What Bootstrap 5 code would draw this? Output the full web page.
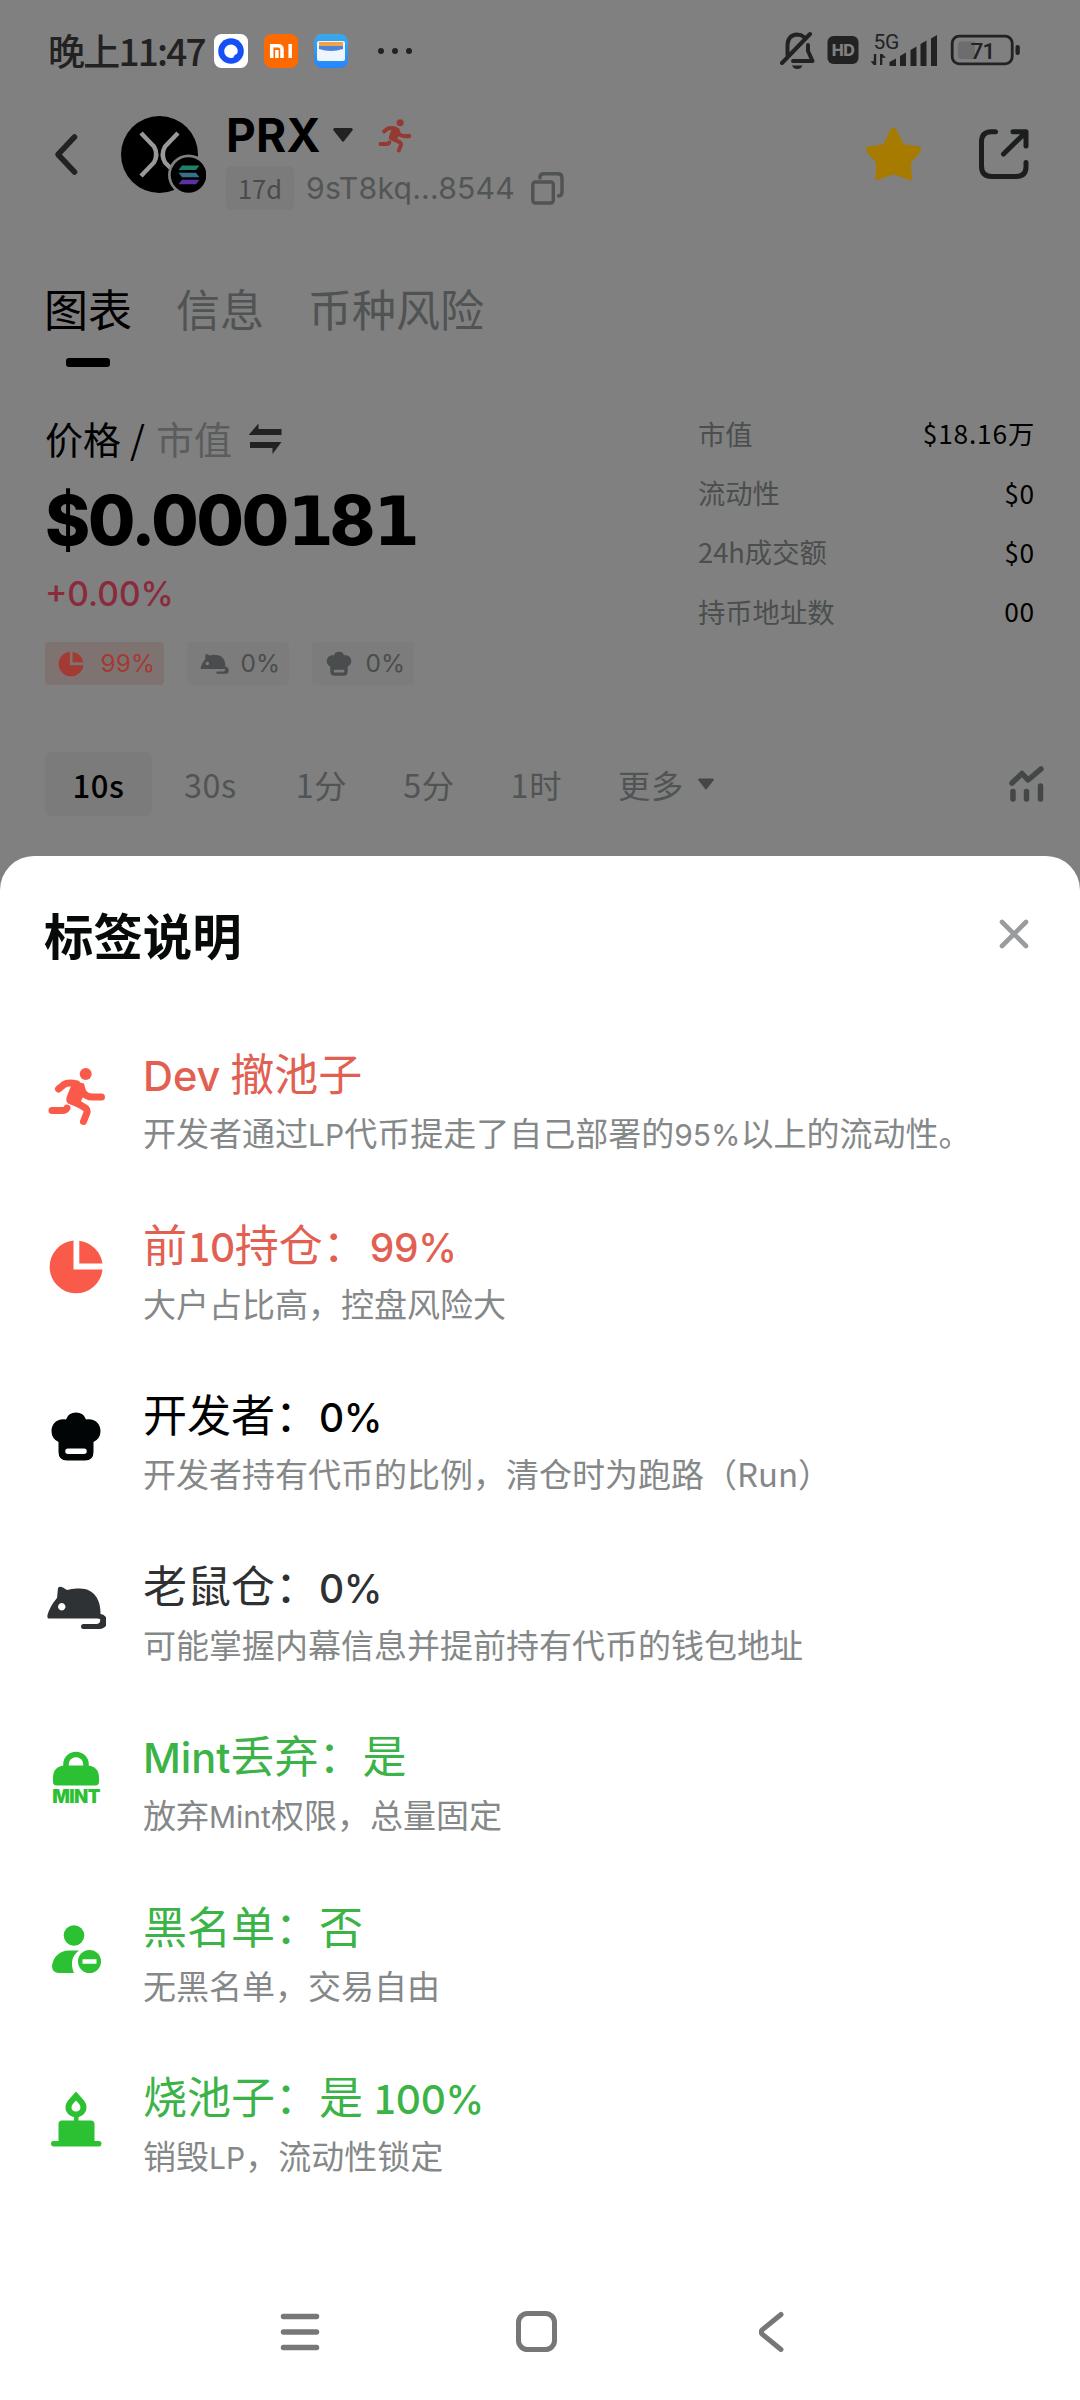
<!DOCTYPE html>
<html lang="zh-CN">
<head>
<meta charset="utf-8">
<meta name="viewport" content="width=device-width, initial-scale=1">
<title>PRX</title>
<link href="https://cdn.jsdelivr.net/npm/bootstrap@5.3.0/dist/css/bootstrap.min.css" rel="stylesheet">
<style>
body{background:#808080;font-family:"Noto Sans CJK SC","Noto Sans",sans-serif;color:#000;line-height:1;width:1080px;height:2400px;overflow:hidden;font-size:33px}
svg{display:block;flex:none}
.lat{font-family:Inter,"Noto Sans CJK SC",sans-serif}
.statusbar{height:102px;padding:0 60px 0 48px;color:#222}
.clock{font-size:37px;letter-spacing:-1.8px;width:166px;font-weight:500;white-space:nowrap;margin-top:-2px}
.topbar{height:120px;padding:0 51px 0 54px}
.names{padding-top:9px;margin-left:20px}
.nameline{height:48px}
.sym{font-size:46px;font-weight:700;letter-spacing:.3px}
.sym-caret{margin-left:12px}
.sym-run{margin-left:24px;color:#933a33}
.age{width:68px;height:44px;background:#7b7b7b;border-radius:6px;font-size:25.5px;color:#484b4b;margin-top:-1px}
.addr{font-size:30.2px;color:#525555;letter-spacing:.2px}
.actions{margin-top:26px}
.tabs-row{padding:39px 44px 0;gap:44px;height:151px;font-size:44px;color:#505353}
.tabs-row .bar{width:44px;height:9px;border-radius:3px;background:#000;margin:20px auto 0}
.tab-item{height:95px;line-height:60px;padding-top:17px}
.pricebox{height:345px;padding:0 45px}
.pt{font-size:38px;line-height:54px;margin-top:38px}
.pt-slash{margin:0 11px 0 9px}
.pt-alt{color:#5a5d5d}
.pt-swap{margin:2px 0 0 17px}
.amount{font-family:Inter,sans-serif;font-size:68.5px;font-weight:800;line-height:84px;height:84px;margin-top:14px;letter-spacing:-2.1px}
.amount span{font-family:"DejaVu Sans",sans-serif;font-weight:700;font-size:67px;letter-spacing:-4px;line-height:1}
.chg{font-size:33.5px;font-weight:500;line-height:44px;color:#8a2a3d;margin-top:9px}
.tagrow{gap:23px;margin-top:26px}
.tg{height:43px;width:102px;background:#7c7c7c;border-radius:4px;font-size:24.5px;color:#4a4d4d;padding:0 9px 0 12px}
.tg.hot{width:119px;background:#7e7371;color:#a33a34}
.stats{width:337px;margin-top:31px;font-size:27.3px;color:#4b4e4e}
.stats>div{height:59.2px}
.stats b{font-weight:400;color:#000;font-size:26.3px;letter-spacing:.8px}
.frames{height:64px;padding:0 35px 0 45px;margin-top:34px;font-size:32.3px;letter-spacing:.6px;color:#515454}
.frames .on{width:107px;height:64px;background:#7b7b7b;border-radius:8px;color:#000;font-weight:500;font-size:31px}
.frames span+span{margin-left:56px}
.frames .on+span{margin-left:32px;margin-right:3px}
.more-caret{margin-left:14px}
.sheet{margin-top:40px;background:#fff;border-radius:34px 34px 0 0;height:1544px}
.sheet h1{font-size:49.4px;font-weight:700;line-height:60px;margin:0;color:#060a09}
.sheet-head{padding:48px 51px 0 44px;height:173px}
.sheet-close{margin-top:15px}
.rowi{height:170.5px;padding:0 46px;gap:37px}
.rowi svg{margin-top:37px}
.tt{font-size:44px;line-height:56px;height:56px;margin-top:15px;white-space:nowrap}
.tt .lat{font-size:41.5px;font-weight:500;line-height:1}
.tt .numl{font-size:39px;letter-spacing:-.3px}
.tt .n99{margin-left:3px}
.tt .one{font-family:"Noto Sans CJK SC",sans-serif;font-weight:500;font-size:39px;line-height:1;margin-left:1px}
.dd{font-size:33px;line-height:44px;height:44px;color:#858888;margin-top:10px;white-space:nowrap}
.dd .lat{font-size:30px;line-height:1}
.red{color:#e26052}.grn{color:#3bb346}.drk{color:#2e3032}
.ic-red{color:#fa5a4a}.ic-blk{color:#020505}.ic-drk{color:#2f3234}.ic-grn{color:#2cc132}
.navi{height:137px;padding:0 280px}
.nav-home{margin-left:196px}
.nav-back{margin-left:202px}
</style>
</head>
<body>
<svg width="0" height="0" class="position-absolute"><defs>
<symbol id="run" viewBox="0 0 60 60"><g fill="none" stroke="currentColor" stroke-width="7" stroke-linecap="round" stroke-linejoin="round"><path d="M12.500 23 18 18.500Q22 16 31 18L38 27.500Q41 31 46 31H55.500"/><path d="M6 44.500H16Q20 44.500 21 42"/><path d="M28 35 40 42.500Q41.500 44 41 46.500L37.500 55.500"/></g><path d="M25 14.500 38 17.500 40 25 34.500 36 33 42 22 37.500Q19 35 21 30L25 20Z" fill="currentColor"/><circle cx="39.700" cy="8" r="6" fill="currentColor"/></symbol>
<symbol id="pie" viewBox="0 0 60 60"><path fill="currentColor" d="M27.500 3.500V32.500H56.500A26.500 26.500 0 1 1 27.500 3.500ZM33.300 3.800A27 27 0 0 1 56.500 26.500H33.300Z"/></symbol>
<symbol id="hat" viewBox="0 0 60 60"><path fill="currentColor" fill-rule="evenodd" d="M20 12.500A10.500 10 0 0 1 40 12.500C49 11 54.500 17 54.500 24Q54.500 31.500 47.500 35V45Q47.500 53.500 39 53.500H21Q12.500 53.500 12.500 45V35Q5.500 31.500 5.500 24C5.500 17 11 11 20 12.500ZM22 41.500A2.700 2.700 0 0 0 22 47H38A2.700 2.700 0 0 0 38 41.500Z"/></symbol>
<symbol id="mouse" viewBox="0 0 60 60"><path fill="currentColor" fill-rule="evenodd" d="M12 10Q13 8 16 9L21 12Q27 10 33 10.500C48 10 55 22 54.500 36A7.500 7.500 0 0 1 53 51H37.500A2.500 2.500 0 0 1 37.500 46H51Q55 45 54 41Q53 40.500 51 40.500H2.500Q1 40.500 1.500 37Q4 28 11 20Z M15.700 25A3.700 3.700 0 1 0 15.800 25Z"/></symbol>
<symbol id="userminus" viewBox="0 0 60 60"><circle cx="28" cy="16.500" r="10.300" fill="currentColor"/><path fill="currentColor" d="M22 31.500H33Q22 40 28 54H13Q6 54 6 47Q8 33 22 31.500Z"/><circle cx="43.500" cy="42.500" r="11.500" fill="currentColor"/><path stroke="#fff" stroke-width="4.500" d="M36.500 42.500H50.500"/></symbol>
<symbol id="candle" viewBox="0 0 60 60"><path fill="currentColor" fill-rule="evenodd" d="M30 2.500L38 11.500C44 20 38 27 32.500 28V31.500H45Q48.500 31.500 48.500 35V52H53Q55.500 52 55.500 54.500T53 57.500H7.500Q5 57.500 5 54.500T7.500 52H12.500V35Q12.500 31.500 16 31.500H28V28C22 27 16 20 22 11.500ZM30 11.500L26.500 15.500C24 20 27 22.500 30 22.500S36 20 33.500 15.500Z"/></symbol>
</defs></svg>

<header class="statusbar d-flex align-items-center">
  <div class="clock">晚上11:47</div>
  <svg width="200" height="34" viewBox="214 34 200 34">
    <rect x="214" y="34" width="34" height="34" rx="7.500" fill="#fff"/><circle cx="231" cy="51" r="12.800" fill="#1450f5"/><path fill="#fff" d="M231 44.500a6.700 6.700 0 0 1 6.700 6.700q0 2.300-1.500 3-1.900.3-2.200 2-.3 1.700-2 1.900h-1a6.800 6.800 0 0 1 0-13.600z"/>
    <rect x="264" y="34" width="34" height="34" rx="7.500" fill="#ff6a00"/><path fill="none" stroke="#fff" stroke-width="3.500" d="M271.700 58V45.700H278Q282 45.700 282 49.500V58M276.900 50V58M290.200 44V58"/>
    <defs><linearGradient id="g1" x2="0" y2="1"><stop stop-color="#3ba9ea"/><stop offset="1" stop-color="#2486ff"/></linearGradient></defs>
    <rect x="314" y="34" width="34" height="34" rx="8" fill="url(#g1)"/><rect x="317" y="41" width="28" height="20" rx="2" fill="#eef5fc"/><path fill="#f1a447" d="M319 42H343V46H319z"/><path fill="#4f83d6" d="M319 46H343V49Q331 53 319 49z"/>
    <g fill="#222"><circle cx="381" cy="51" r="3"/><circle cx="395" cy="51" r="3"/><circle cx="409" cy="51" r="3"/></g>
  </svg>
  <svg class="ms-auto" width="240" height="40" viewBox="780 32 240 40">
    <g fill="none" stroke="#222" stroke-width="4" stroke-linecap="round" stroke-linejoin="round"><path d="M787.500 56V46Q788 36 797 35.500Q801 35.500 804 38M808 46V52L812.500 62H793M782 64L810 35"/></g><path fill="#222" d="M792 66.500H802.500Q801 70 797.300 70T792 66.500z"/>
    <rect x="827.500" y="37" width="31" height="28" rx="6" fill="#222"/><text x="843" y="57.300" text-anchor="middle" font-family="Inter,sans-serif" font-weight="800" font-size="16" letter-spacing="-.5" fill="#808080">HD</text>
    <text x="873.500" y="49.500" font-family="Roboto,sans-serif" font-size="21" letter-spacing="-.3" fill="#222">5G</text>
    <path fill="#222" d="M876.200 55V66H873.800L870.500 62.300H873.800V55zM880 66V55H882.300L886 58.800H882.300V66zM889.500 67V63L896 59.500V67zM900 67V57L906 53.500V67zM910.500 67V51L916.500 47.500V67zM920.500 67V45L926.500 41.500V67zM931 67V39.500L937 36V67z"/>
    <rect x="952.200" y="37.200" width="60" height="27.600" rx="7" fill="none" stroke="#222" stroke-width="2.800"/><path fill="#6d6d6d" d="M962 42.500H975V60H962Q958 60 958 56V46.500Q958 42.500 962 42.500z"/><text x="982.500" y="59.500" text-anchor="middle" font-family="Roboto,sans-serif" font-weight="500" font-size="22.500" letter-spacing="-.8" fill="#222">71</text><rect x="1015.500" y="46" width="4.300" height="10" rx="2" fill="#222"/>
  </svg>
</header>

<section class="topbar d-flex align-items-start">
  <svg width="152" height="110" viewBox="54 102 152 110">
    <path fill="none" stroke="#222" stroke-width="5.500" stroke-linecap="round" stroke-linejoin="round" d="M74.500 137L58 154.500L74.500 172"/>
    <circle cx="159.500" cy="154.500" r="38.500" fill="#000"/><g fill="none" stroke="#999" stroke-width="4.500"><path d="M141 133L154 146.500Q158.500 154.500 154 162.500L141 176"/><path d="M178 133L165 146.500Q160.500 154.500 165 162.500L178 175.500"/></g>
    <circle cx="188.500" cy="175" r="20.500" fill="#808080"/><circle cx="188.500" cy="175" r="17.800" fill="#000"/>
    <path fill="#1f8068" d="M182 165.500H199.500L196 170H178.500z"/><path fill="#387088" d="M178.500 172.800H196L199.500 177.200H182z"/><path fill="#5b32a5" d="M182 179.800H199.500L196 184.300H178.500z"/>
  </svg>
  <div class="names flex-grow-1">
    <div class="nameline d-flex align-items-center"><span class="sym lat">PRX</span>
      <svg class="sym-caret" width="20" height="14" viewBox="0 0 20 14"><path fill="#222" d="M1.500 0H18.500Q21 1 19 3L11.500 12.500Q10 15 8.500 12.500L1 3Q-1 1 1.500 0z"/></svg>
      <svg class="sym-run" width="35" height="35"><use href="#run"/></svg></div>
    <div class="d-flex align-items-center mt-1 pt-1"><span class="age d-flex align-items-center justify-content-center">17d</span><span class="addr lat ms-2 ps-1">9sT8kq...8544</span>
      <svg class="ms-3" width="33" height="33" viewBox="0 0 33 33" fill="none" stroke="#505353" stroke-width="3.400"><rect x="1.800" y="10" width="20.500" height="21" rx="2.500"/><path stroke-linecap="round" d="M9 6V5Q9 1.800 13 1.800H27Q31 1.800 31 6V20Q31 24 27.500 24"/></svg></div>
  </div>
  <svg class="actions" width="163" height="54" viewBox="865 128 163 54"><path fill="#a67b00" stroke="#a67b00" stroke-width="2.500" stroke-linejoin="round" d="M890.500 130.500Q892.500 127.500 894.500 130.500L902 145.500L917.500 147.500Q920 149 918 151.500L908.500 163L910 179L892.500 173L875.500 179L876.500 163L867 151.500Q865 148.500 868 147.500L883 145.500z"/>
    <path fill="none" stroke="#1c1e1e" stroke-width="5" stroke-linecap="round" stroke-linejoin="round" d="M994.500 131.800H990Q980.500 132 980.500 142V166Q980.500 176.500 991 176.500H1015Q1025 176.500 1025 167V162.500M1002.500 154L1024 133M1012 131.800H1025V146"/>
  </svg>
</section>

<nav class="tabs-row d-flex">
  <div class="tab-item text-black">图表<div class="bar"></div></div><div class="tab-item">信息</div><div class="tab-item">币种风险</div>
</nav>

<section class="pricebox d-flex justify-content-between">
  <div>
    <div class="pt d-flex align-items-center"><span>价格</span><span class="pt-slash">/</span><span class="pt-alt">市值</span>
      <svg class="pt-swap" width="33" height="32" viewBox="0 0 33 32" fill="#222"><path d="M0 11.500L9.500 0.500V6H32.500V12H0zM32.500 19L23.500 31V25H1V19z"/></svg></div>
    <div class="amount">$0.000<span>1</span>8<span>1</span></div>
    <div class="chg lat">+0.00%</div>
    <div class="tagrow d-flex">
      <div class="tg hot d-flex align-items-center justify-content-between"><svg width="28" height="28"><use href="#pie"/></svg><span class="lat">99%</span></div>
      <div class="tg d-flex align-items-center justify-content-between"><svg width="30" height="28"><use href="#mouse"/></svg><span class="lat">0%</span></div>
      <div class="tg d-flex align-items-center justify-content-between"><svg width="30" height="30"><use href="#hat"/></svg><span class="lat">0%</span></div>
    </div>
  </div>
  <div class="stats">
    <div class="d-flex justify-content-between align-items-center"><span>市值</span><b>$18.16万</b></div>
    <div class="d-flex justify-content-between align-items-center"><span>流动性</span><b>$0</b></div>
    <div class="d-flex justify-content-between align-items-center"><span>24h成交额</span><b>$0</b></div>
    <div class="d-flex justify-content-between align-items-center"><span>持币地址数</span><b>00</b></div>
  </div>
</section>

<section class="frames d-flex align-items-center">
  <span class="on d-flex align-items-center justify-content-center">10s</span>
  <span>30s</span><span>1分</span><span>5分</span><span>1时</span><span>更多</span>
  <svg class="more-caret" width="16" height="12" viewBox="0 0 20 14"><path fill="#444747" d="M1.500 0H18.500Q21 1 19 3L11.500 12.500Q10 15 8.500 12.500L1 3Q-1 1 1.500 0z"/></svg>
  <svg class="ms-auto" width="36" height="36" viewBox="0 0 36 36" fill="none" stroke="#444747" stroke-width="5.500" stroke-linecap="round" stroke-linejoin="round"><path d="M3 17L13 7.500L19 14L32 3"/><path d="M4 25.500V33M17.500 25.500V33M31.500 20V33"/></svg>
</section>

<main class="sheet d-flex flex-column">
  <div class="sheet-head d-flex justify-content-between align-items-start"><h1>标签说明</h1>
    <svg class="sheet-close" width="30" height="30" viewBox="0 0 30 30" stroke="#999c9c" stroke-width="4.600" stroke-linecap="round"><path d="M3 3L27 27M27 3L3 27"/></svg></div>
  <div class="rowi d-flex"><svg class="ic-red" width="60" height="60"><use href="#run"/></svg><div><div class="tt red"><span class="lat">Dev</span> 撤池子</div><div class="dd">开发者通过<span class="lat">LP</span>代币提走了自己部署的<span class="lat">95%</span>以上的流动性。</div></div></div>
  <div class="rowi d-flex"><svg class="ic-red" width="60" height="60"><use href="#pie"/></svg><div><div class="tt red">前<span class="lat numl"><span class="one">1</span>0</span>持仓：<span class="lat numl n99">99%</span></div><div class="dd">大户占比高，控盘风险大</div></div></div>
  <div class="rowi d-flex"><svg class="ic-blk" width="60" height="60"><use href="#hat"/></svg><div><div class="tt">开发者：<span class="lat numl">0%</span></div><div class="dd">开发者持有代币的比例，清仓时为跑路（Run）</div></div></div>
  <div class="rowi d-flex"><svg class="ic-drk" width="60" height="60"><use href="#mouse"/></svg><div><div class="tt drk">老鼠仓：<span class="lat numl">0%</span></div><div class="dd">可能掌握内幕信息并提前持有代币的钱包地址</div></div></div>
  <div class="rowi d-flex"><svg class="ic-grn" width="60" height="60" viewBox="0 0 60 60"><path fill="none" stroke="currentColor" stroke-width="5.500" d="M20 20V16A10 9.500 0 0 1 40 16V20"/><path fill="currentColor" d="M19 17.500H41Q53 18 53 30V34Q53 37.500 49 37.500H11Q7 37.500 7 34V30Q7 18 19 17.500Z"/><text x="30" y="54.500" text-anchor="middle" font-family="Inter,sans-serif" font-weight="900" font-size="18.500" letter-spacing="-.6" fill="currentColor">MINT</text></svg><div><div class="tt grn"><span class="lat">Mint</span>丢弃：是</div><div class="dd">放弃<span class="lat">Mint</span>权限，总量固定</div></div></div>
  <div class="rowi d-flex"><svg class="ic-grn" width="60" height="60"><use href="#userminus"/></svg><div><div class="tt grn">黑名单：否</div><div class="dd">无黑名单，交易自由</div></div></div>
  <div class="rowi d-flex"><svg class="ic-grn" width="60" height="60"><use href="#candle"/></svg><div><div class="tt grn">烧池子：是 <span class="lat numl"><span class="one">1</span>00%</span></div><div class="dd">销毁<span class="lat">LP</span>，流动性锁定</div></div></div>
  <div class="navi mt-auto d-flex align-items-center">
    <svg width="40" height="42" viewBox="0 0 40 42" stroke="#777" stroke-width="5.500" stroke-linecap="round"><path d="M3.500 5.500H36.500M3.500 21H36.500M3.500 36.500H36.500"/></svg>
    <svg class="nav-home" width="41" height="41" viewBox="0 0 41 41" fill="none" stroke="#777" stroke-width="5"><rect x="2.500" y="2.500" width="36" height="36" rx="9"/></svg>
    <svg class="nav-back" width="40" height="42" viewBox="0 0 40 42" fill="none" stroke="#777" stroke-width="5" stroke-linecap="round"><path d="M22 3.500L3.500 18.500Q1 21 3.500 23.500L22 38.500"/></svg>
  </div>
</main>
<script src="https://cdn.jsdelivr.net/npm/bootstrap@5.3.0/dist/js/bootstrap.bundle.min.js"></script>
</body>
</html>
